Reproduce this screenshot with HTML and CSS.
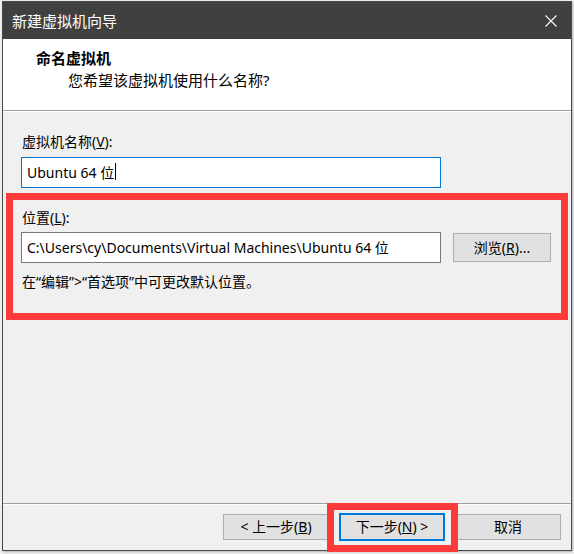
FILE: index.html
```html
<!DOCTYPE html>
<html lang="zh-CN">
<head>
<meta charset="utf-8">
<title>新建虚拟机向导</title>
<link rel="stylesheet" href="styles.css">
</head>
<body>
<div class="window">
  <div class="titlebar">
    <span class="title">新建虚拟机向导</span>
    <svg class="close" width="12" height="12" viewBox="0 0 12 12"><path d="M0.5 0.5 L11.5 11.5 M11.5 0.5 L0.5 11.5" stroke="#fff" stroke-width="1.1" fill="none"/></svg>
  </div>
  <div class="header">
    <div class="h-title">命名虚拟机</div>
    <div class="h-sub">您希望该虚拟机使用什么名称?</div>
  </div>
  <div class="content">
    <div class="name-section">
      <div class="label">虚拟机名称(<u>V</u>):</div>
      <div class="input focused">Ubuntu 64 位<span class="caret"></span></div>
    </div>
    <div class="loc-group">
      <div class="label">位置(<u>L</u>):</div>
      <div class="loc-row">
        <div class="input path">C:\Users\cy\Documents\Virtual Machines\Ubuntu 64 位</div>
        <div class="btn browse">浏览(<u>R</u>)...</div>
      </div>
      <div class="note">在“编辑”&gt;“首选项”中可更改默认位置。</div>
    </div>
  </div>
  <div class="footer">
    <div class="btn">&lt; 上一步(<u>B</u>)</div>
    <div class="btn default">下一步(<u>N</u>) &gt;</div>
    <div class="btn">取消</div>
  </div>
  <div class="highlight"></div>
</div>
</body>
</html>
```
FILE: styles.css
```css
* { box-sizing: border-box; }
html, body { margin: 0; padding: 0; }
body {
  background: #f0f0f0;
  width: 574px;
  height: 554px;
  overflow: hidden;
  font-family: "Noto Sans", "Noto Sans CJK SC", sans-serif;
  font-size: 14px;
  color: #000;
}
.window {
  position: relative;
  margin: 1px 0 0 2px;
  width: 570px;
  height: 550px;
  border: 1px solid #4a4a4a;
  background: #f0f0f0;
  display: flex;
  flex-direction: column;
  box-shadow: 1px 1px 2px rgba(0,0,0,0.25);
}
.titlebar {
  height: 37px;
  flex: none;
  background: #404040;
  display: flex;
  align-items: center;
  justify-content: space-between;
  padding: 0 14px 0 9px;
}
.title {
  color: #fff;
  font-family: "Noto Sans CJK SC", sans-serif;
  font-size: 15px;
}
.close { display: block; }
.header {
  height: 72px;
  flex: none;
  background: #fff;
  border-bottom: 1px solid #a0a0a0;
  padding: 9px 0 0 33px;
}
.h-title {
  font-family: "Noto Sans CJK SC", sans-serif;
  font-weight: bold;
  font-size: 15px;
  line-height: 20px;
}
.h-sub {
  padding-left: 32px;
  margin-top: 2px;
  line-height: 20px;
  font-size: 15px;
}
.content {
  flex: 1;
  border-top: 1px solid #fff;
  padding: 20px 3px 0 3px;
}
.label {
  line-height: 20px;
}
.name-section {
  padding-left: 15px;
}
.name-section .label { padding-left: 1px; margin-bottom: 5px; }
.input {
  background: #fff;
  border: 1px solid #7a7a7a;
  display: flex;
  align-items: center;
  padding: 0 0 2px 5px;
  white-space: nowrap;
}
.name-section .input {
  width: 420px;
  height: 31px;
}
.input.focused { border-color: #0078d7; }
.caret {
  display: inline-block;
  width: 1px;
  height: 17px;
  background: #000;
  margin-left: 1px;
}
.loc-group {
  margin-top: 5px;
  border: 7px solid #fd3a3a;
  height: 127px;
  padding: 8px 10px 0 8px;
}
.loc-group .label { padding-left: 1px; margin-bottom: 4px; }
.loc-row {
  display: flex;
  align-items: center;
  justify-content: space-between;
}
.input.path {
  width: 420px;
  height: 31px;
}
.btn {
  height: 26px;
  width: 106px;
  background: #e1e1e1;
  border: 1px solid #adadad;
  display: flex;
  align-items: center;
  justify-content: center;
  padding-bottom: 1px;
}
.browse {
  width: 98px;
  height: 29px;
}
.note {
  margin-top: 9px;
  padding-left: 1px;
  line-height: 20px;
}
.footer {
  height: 47px;
  flex: none;
  border-top: 1px solid #a0a0a0;
  box-shadow: inset 0 1px 0 #fcfcfc;
  display: flex;
  align-items: center;
  justify-content: flex-end;
  gap: 10px;
  padding: 0 10px 1px 0;
}
.btn.default {
  border: 2px solid #0078d7;
  height: 28px;
}
.highlight {
  position: absolute;
  left: 324px;
  top: 501px;
  width: 131px;
  height: 49px;
  border: 7px solid #fd3a3a;
}
```
